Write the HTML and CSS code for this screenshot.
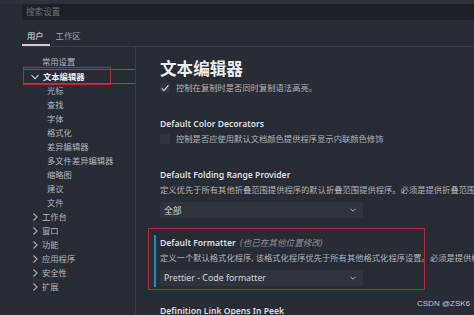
FILE: index.html
```html
<!DOCTYPE html>
<html lang="zh">
<head>
<meta charset="utf-8">
<title>设置</title>
<link rel="stylesheet" href="styles.css">
</head>
<body>
<div class="app">
  <div class="top-strip"></div>
  <div class="search"><span class="placeholder">搜索设置</span></div>
  <div class="tabs">
    <span class="tab active">用户</span>
    <span class="tab">工作区</span>
  </div>
  <div class="body">
    <nav class="tree">
      <div class="row plain">常用设置</div>
      <div class="row expanded">
        <svg class="twisty" viewBox="0 0 10 10"><path d="M1.5 3.2 L5 6.7 L8.5 3.2" /></svg>
        <span>文本编辑器</span>
      </div>
      <div class="row child">光标</div>
      <div class="row child">查找</div>
      <div class="row child">字体</div>
      <div class="row child">格式化</div>
      <div class="row child">差异编辑器</div>
      <div class="row child">多文件差异编辑器</div>
      <div class="row child">缩略图</div>
      <div class="row child">建议</div>
      <div class="row child">文件</div>
      <div class="row collapsed"><svg class="twisty" viewBox="0 0 10 10"><path d="M3.5 1.5 L7 5 L3.5 8.5" /></svg><span>工作台</span></div>
      <div class="row collapsed"><svg class="twisty" viewBox="0 0 10 10"><path d="M3.5 1.5 L7 5 L3.5 8.5" /></svg><span>窗口</span></div>
      <div class="row collapsed"><svg class="twisty" viewBox="0 0 10 10"><path d="M3.5 1.5 L7 5 L3.5 8.5" /></svg><span>功能</span></div>
      <div class="row collapsed"><svg class="twisty" viewBox="0 0 10 10"><path d="M3.5 1.5 L7 5 L3.5 8.5" /></svg><span>应用程序</span></div>
      <div class="row collapsed"><svg class="twisty" viewBox="0 0 10 10"><path d="M3.5 1.5 L7 5 L3.5 8.5" /></svg><span>安全性</span></div>
      <div class="row collapsed"><svg class="twisty" viewBox="0 0 10 10"><path d="M3.5 1.5 L7 5 L3.5 8.5" /></svg><span>扩展</span></div>
    </nav>
    <main class="content">
      <h1 class="page-title">文本编辑器</h1>
      <div class="check-row lead">
        <span class="checkbox"><svg viewBox="0 0 10 10"><path d="M1.8 5.4 L4 7.6 L8.4 2.4" /></svg></span>
        <span class="desc">控制在复制时是否同时复制语法高亮。</span>
      </div>

      <section class="setting s-color">
        <div class="setting-body">
          <div class="setting-title">Default Color Decorators</div>
          <div class="check-row">
            <span class="checkbox"></span>
            <span class="desc">控制是否应使用默认文档颜色提供程序显示内联颜色修饰</span>
          </div>
        </div>
      </section>

      <section class="setting s-folding">
        <div class="setting-body">
          <div class="setting-title">Default Folding Range Provider</div>
          <div class="desc line">定义优先于所有其他折叠范围提供程序的默认折叠范围提供程序。必须是提供折叠范围提供程序的扩展的标识符。</div>
          <div class="select">
            <span>全部</span>
            <svg class="select-arrow" viewBox="0 0 10 10"><path d="M2 3.5 L5 6.5 L8 3.5" /></svg>
          </div>
        </div>
      </section>

      <section class="setting s-formatter">
        <div class="setting-body modified">
          <div class="setting-title">Default Formatter <em class="note">(也已在其他位置修改)</em></div>
          <div class="desc line">定义一个默认格式化程序, 该格式化程序优先于所有其他格式化程序设置。必须是提供格式化程序的扩展的标识符。</div>
          <div class="select">
            <span>Prettier - Code formatter</span>
            <svg class="select-arrow" viewBox="0 0 10 10"><path d="M2 3.5 L5 6.5 L8 3.5" /></svg>
          </div>
        </div>
      </section>

      <section class="setting s-peek">
        <div class="setting-body">
          <div class="setting-title">Definition Link Opens In Peek</div>
        </div>
      </section>
    </main>
  </div>
  <div class="annot annot-tree"></div>
  <div class="annot annot-formatter"></div>
  <div class="watermark">CSDN @ZSK6</div>
</div>
</body>
</html>
```

FILE: styles.css
```css
* { box-sizing: border-box; margin: 0; padding: 0; }

html, body {
  width: 474px;
  height: 315px;
  overflow: hidden;
  background: #282c34;
}

body {
  font-family: "Noto Sans", "Noto Sans CJK SC", sans-serif;
  color: #b1b4ba;
  font-size: 8.3px;
}

.app {
  position: relative;
  width: 474px;
  height: 315px;
  overflow: hidden;
  display: flex;
  flex-direction: column;
}

.top-strip {
  height: 4px;
  background: #2d313a;
  flex: none;
}

.search {
  height: 16px;
  margin-left: 22px;
  background: #1d2026;
  display: flex;
  align-items: center;
  padding-left: 4px;
  flex: none;
}

.placeholder {
  color: #6c7079;
  font-size: 8.6px;
  line-height: 12px;
}

.tabs {
  height: 27px;
  margin-left: 22px;
  display: flex;
  align-items: flex-end;
  gap: 2px;
  border-bottom: 1px solid #3a3e47;
  flex: none;
}

.tab {
  padding: 0 4px 2px;
  line-height: 12px;
  font-size: 8.3px;
  color: #a3a6ac;
  border-bottom: 2px solid transparent;
}

.tab.active {
  color: #e4e6ea;
  border-bottom-color: #c9ccd1;
  padding-left: 5px;
  padding-right: 6px;
  margin-left: 0;
}

.body {
  flex: 1;
  display: flex;
  min-height: 0;
}

.tree {
  width: 136px;
  flex: none;
  border-right: 1px solid #3a3e47;
  padding-top: 8px;
  display: flex;
  flex-direction: column;
}

.row {
  height: 14px;
  line-height: 14px;
  display: flex;
  align-items: center;
  white-space: nowrap;
  color: #b3b6bb;
  font-size: 8.3px;
}

.row.plain { padding-left: 42px; }

.row.expanded {
  height: 15px;
  margin-left: 23px;
  border: 1px solid #4a5a9c;
  border-right: none;
  padding-left: 6px;
  color: #eef0f3;
  font-weight: 700;
}

.row.child { padding-left: 47px; }

.row.collapsed { padding-left: 30px; }

.twisty {
  width: 10px;
  height: 10px;
  flex: none;
  fill: none;
  stroke: #a9acb2;
  stroke-width: 1.1;
}

.row.expanded .twisty { margin-right: 3px; stroke: #c9ccd1; }
.row.collapsed .twisty { margin-right: 2px; }

.content {
  flex: 1;
  min-width: 0;
  padding-left: 12px;
  overflow: hidden;
}

.page-title {
  margin-top: 12px;
  margin-left: 12px;
  font-size: 16.6px;
  line-height: 20px;
  font-weight: 700;
  color: #eceef1;
}

.check-row {
  display: flex;
  align-items: center;
  height: 12px;
  gap: 6px;
}

.check-row.lead {
  margin-top: 3px;
  margin-left: 12px;
}

.checkbox {
  width: 10px;
  height: 10px;
  flex: none;
  background: #31353d;
  border-radius: 1px;
  display: flex;
  align-items: center;
  justify-content: center;
}

.checkbox svg {
  width: 10px;
  height: 10px;
  fill: none;
  stroke: #d6d8dc;
  stroke-width: 1.1;
}

.desc {
  color: #b1b4ba;
  font-size: 8.3px;
  line-height: 12px;
  white-space: nowrap;
}

.setting {
  padding-left: 6px;
}

.setting-body {
  border-left: 2px solid transparent;
  padding-left: 4px;
}

.setting-body.modified {
  border-left-color: #1d8fbf;
}

.s-color { padding-top: 24px; }
.s-folding { padding-top: 24px; }
.s-formatter { padding-top: 17px; }
.s-peek { padding-top: 18px; }

.s-formatter .setting-body { padding-top: 2px; padding-bottom: 1px; }

.setting-title {
  font-size: 8.6px;
  line-height: 12px;
  font-weight: 600;
  color: #dcdfe3;
  white-space: nowrap;
}

.note {
  font-weight: 400;
  font-style: italic;
  color: #8d9097;
  margin-left: 2px;
}

.setting-title + .check-row { margin-top: 3px; }

.desc.line { margin-top: 3px; }

.select {
  margin-top: 6px;
  width: 203px;
  height: 16px;
  background: #30343c;
  display: flex;
  align-items: center;
  justify-content: space-between;
  padding: 0 6px 0 4px;
  font-size: 8.8px;
  color: #d4d6da;
}

.select-arrow {
  width: 8px;
  height: 8px;
  fill: none;
  stroke: #b8bbc0;
  stroke-width: 1.1;
}

.annot {
  position: absolute;
  border: 1px solid #b22a3c;
  pointer-events: none;
}

.annot-tree {
  left: 23px;
  top: 67px;
  width: 88px;
  height: 18px;
}

.annot-formatter {
  left: 148px;
  top: 228px;
  width: 277px;
  height: 62px;
}

.watermark {
  position: absolute;
  left: 417px;
  top: 298px;
  font-family: "Liberation Sans", sans-serif;
  font-size: 8px;
  line-height: 11px;
  color: #c4c6ca;
}
```
